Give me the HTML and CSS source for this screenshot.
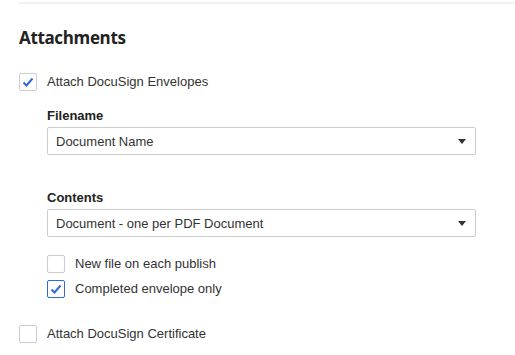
FILE: index.html
```html
<!DOCTYPE html>
<html lang="en">
<head>
    <meta charset="UTF-8">
    <title>Attachments</title>
    <link rel="stylesheet" href="styles.css">
</head>
<body>
    <div class="page">
        <div class="rule"></div>

        <h3 class="title">Attachments</h3>

        <label class="check">
            <span class="box checked">
                <svg viewBox="0 0 18 18" width="18" height="18"><path d="M4.5 9.5 L7.5 12.5 L13.5 5.5" fill="none" stroke="#2a6bd8" stroke-width="2"/></svg>
            </span>
            <span>Attach DocuSign Envelopes</span>
        </label>

        <div class="sub">
            <div class="field">
                <div class="label">Filename</div>
                <div class="select">
                    <span>Document Name</span>
                    <span class="arrow"></span>
                </div>
            </div>

            <div class="field">
                <div class="label">Contents</div>
                <div class="select">
                    <span>Document - one per PDF Document</span>
                    <span class="arrow"></span>
                </div>
            </div>

            <div class="options">
                <label class="check">
                    <span class="box"></span>
                    <span>New file on each publish</span>
                </label>
                <label class="check">
                    <span class="box checked focus">
                        <svg viewBox="0 0 18 18" width="18" height="18"><path d="M4.5 9.5 L7.5 12.5 L13.5 5.5" fill="none" stroke="#2a6bd8" stroke-width="2"/></svg>
                    </span>
                    <span>Completed envelope only</span>
                </label>
            </div>
        </div>

        <label class="check last">
            <span class="box"></span>
            <span>Attach DocuSign Certificate</span>
        </label>
    </div>
</body>
</html>
```

FILE: styles.css
```css
body {
    margin: 0;
    background-color: #fff;
    font-family: "Liberation Sans", Arial, sans-serif;
    font-size: 13px;
    color: #333;
}

.page {
    padding-left: 19px;
}

.rule {
    height: 2px;
    margin-top: 2px;
    background-color: #f2f2f2;
}

.title {
    margin: 22px 0 0 0;
    font-family: "Open Sans", sans-serif;
    font-size: 17px;
    font-weight: 700;
    letter-spacing: -0.35px;
    line-height: 24px;
    color: #222;
}

.check {
    display: flex;
    align-items: center;
    gap: 10px;
    height: 18px;
    line-height: 18px;
}

.title + .check {
    margin-top: 23px;
}

.box {
    width: 16px;
    height: 16px;
    border: 1px solid #ccc;
    border-radius: 2px;
    position: relative;
    flex-shrink: 0;
}

.box svg {
    position: absolute;
    left: -1px;
    top: -1px;
}

.box.focus {
    border-color: #2a6bd8;
}

.sub {
    padding-left: 28px;
    width: 429px;
}

.field {
    margin-top: 17px;
}

.field + .field {
    margin-top: 35px;
}

.label {
    font-weight: 700;
    color: #222;
    line-height: 16px;
    margin-bottom: 3px;
}

.select {
    height: 26px;
    border: 1px solid #ccc;
    border-radius: 2px;
    display: flex;
    align-items: center;
    justify-content: space-between;
    padding: 0 9px 0 8px;
}

.arrow {
    width: 0;
    height: 0;
    border-left: 4px solid transparent;
    border-right: 4px solid transparent;
    border-top: 5px solid #333;
}

.options {
    margin-top: 18px;
    display: flex;
    flex-direction: column;
    gap: 7px;
}

.check.last {
    margin-top: 27px;
}
```
